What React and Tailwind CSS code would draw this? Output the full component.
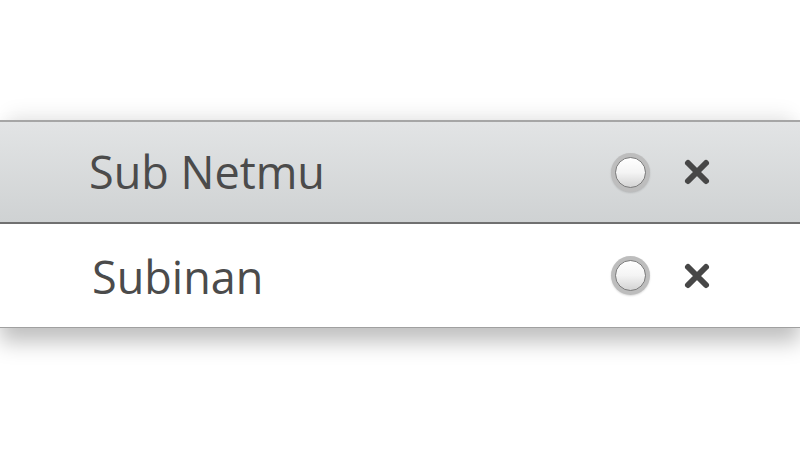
import React from 'react';

function Radio() {
  return (
    <div className="w-[39px] h-[39px] rounded-full bg-[#bdbdbd] p-[4px] shadow-[0_1px_2px_rgba(0,0,0,0.15)]">
      <div className="w-full h-full rounded-full border border-[#7c7c7c] bg-gradient-to-b from-[#ffffff] via-[#f4f4f4] to-[#d4d4d4]" />
    </div>
  );
}

function Close() {
  return (
    <svg width="30" height="30" viewBox="0 0 30 30" className="shrink-0">
      <path d="M6 6 L24 24 M24 6 L6 24" stroke="#474747" strokeWidth="6" strokeLinecap="round" />
    </svg>
  );
}

function Row({ label, className, textClass }) {
  return (
    <div className={`flex items-center pr-[88px] ${className}`}>
      <span className={`flex-1 text-[45px] font-medium leading-none text-[#4b4b4b] ${textClass}`} style={{ fontFamily: '"Open Sans", "Liberation Sans", sans-serif' }}>
        {label}
      </span>
      <Radio />
      <div className="w-[32px]" />
      <Close />
    </div>
  );
}

export default function App() {
  return (
    <div className="w-[800px] h-[450px] bg-white overflow-hidden pt-[120px]">
      <div className="border-t-2 border-[#a6a6a6] shadow-[0_-14px_18px_-8px_rgba(0,0,0,0.08),0_14px_20px_rgba(0,0,0,0.25)]">
        <Row
          label="Sub Netmu"
          className="h-[102px] pl-[89px] bg-gradient-to-b from-[#e2e4e5] to-[#cfd2d3] border-b-2 border-[#707070]"
          textClass="pb-[2px]"
        />
        <Row
          label="Subinan"
          className="h-[104px] pl-[92px] bg-white border-b border-[#a0a0a0]"
          textClass="pt-[2px]"
        />
      </div>
    </div>
  );
}
